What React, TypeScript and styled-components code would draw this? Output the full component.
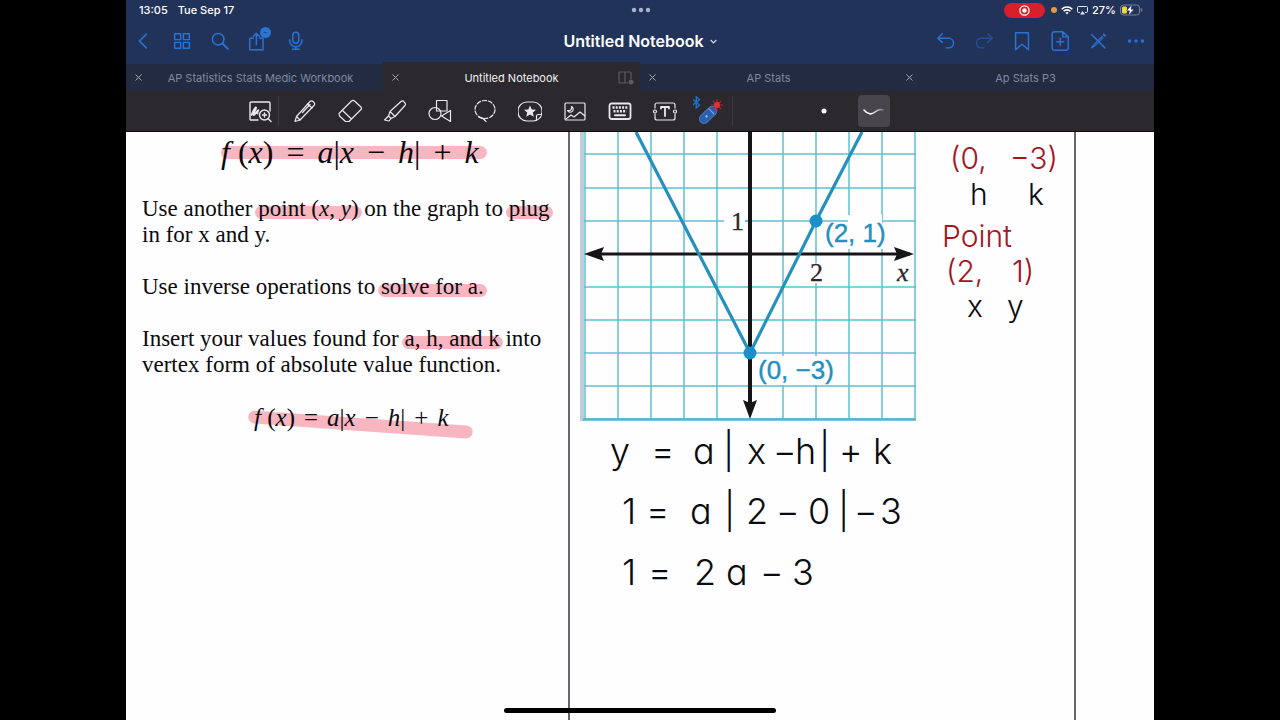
import React from "react";
import styled, { createGlobalStyle, css } from "styled-components";

const GlobalStyle = createGlobalStyle`
  *, *::before, *::after { box-sizing: border-box; }
  body { margin: 0; background: #000; }
  button { border: 0; padding: 0; background: none; color: inherit; font: inherit; cursor: pointer; }
  svg { display: block; flex: none; }
`;

const ui = `Inter, "Liberation Sans", sans-serif`;

const Screen = styled.div`
  min-height: 100vh;
  padding: 0 126px;
  background: #000;
  font-family: ${ui};
`;

const Tablet = styled.div`
  position: relative;
  display: flex;
  flex-direction: column;
  min-height: 100vh;
  overflow: hidden;
  background: #fefdff;
`;

const Header = styled.header`
  background: #223359;
  color: #fff;
`;

const StatusBar = styled.div`
  display: grid;
  grid-template-columns: 1fr auto 1fr;
  align-items: center;
  height: 20px;
  padding: 0 11px 0 13px;
  font-size: 11px;
  font-weight: 500;
`;

const StatusGroup = styled.div<{ $end?: boolean }>`
  display: flex;
  align-items: center;
  gap: ${(p) => (p.$end ? "4px" : "10px")};
  justify-content: ${(p) => (p.$end ? "flex-end" : "flex-start")};
`;

const RecordPill = styled.span`
  display: grid;
  place-items: center;
  width: 41px;
  height: 15px;
  margin-right: 2px;
  border-radius: 8px;
  background: #d81f2a;
`;

const OrangeDot = styled.span`
  width: 6px;
  height: 6px;
  border-radius: 50%;
  background: #e8973c;
`;

const NavBar = styled.nav`
  display: grid;
  grid-template-columns: 1fr auto 1fr;
  align-items: center;
  height: 42px;
`;

const NavGroup = styled.div<{ $end?: boolean }>`
  display: flex;
  gap: 2px;
  justify-content: ${(p) => (p.$end ? "flex-end" : "flex-start")};
`;

const NavButton = styled.button<{ $dim?: boolean }>`
  position: relative;
  display: grid;
  place-items: center;
  width: 36px;
  height: 36px;
  color: ${(p) => (p.$dim ? "#275096" : "#2a72d4")};
`;

const Badge = styled.span`
  position: absolute;
  top: 4px;
  right: 5px;
  width: 11px;
  height: 11px;
  border-radius: 50%;
  background: #2a72d4;
  color: #1c3f7c;
  font-size: 8px;
  line-height: 11px;
  text-align: center;
`;

const TitleButton = styled.button`
  display: flex;
  align-items: center;
  gap: 6px;
  font-size: 16px;
  font-weight: 600;
`;

const TabStrip = styled.div`
  display: flex;
  height: 29px;
  background: #222b3f;
`;

const Tab = styled.div<{ $active?: boolean }>`
  display: flex;
  flex: 1 1 0;
  align-items: center;
  min-width: 0;
  padding: 0 6px;
  background: ${(p) => (p.$active ? "#2b292e" : "transparent")};
  color: ${(p) => (p.$active ? "#f1f0f3" : "#8089a0")};
  border-top: 2px solid ${(p) => (p.$active ? "#2b292e" : "#223359")};
`;

const TabClose = styled.button`
  display: grid;
  place-items: center;
  width: 12px;
  height: 16px;
  color: #a5a9b6;
`;

const TabLabel = styled.button`
  flex: 1;
  font-size: 11px;
  white-space: nowrap;
`;

const TabTail = styled.span<{ $narrow?: boolean }>`
  width: ${(p) => (p.$narrow ? "0" : "12px")};
  display: flex;
  justify-content: flex-end;
  color: #5e5c63;
`;

const Toolbar = styled.div`
  display: flex;
  align-items: center;
  height: 41px;
  padding-left: 116px;
  background: #2b292e;
  border-bottom: 1px solid #0c0c0e;
  color: #e9e8ec;
`;

const ToolButton = styled.button<{ $narrow?: boolean }>`
  display: grid;
  place-items: center;
  width: ${(p) => (p.$narrow ? "36px" : "45px")};
  height: 32px;
`;

const Divider = styled.span`
  width: 1px;
  height: 30px;
  margin-right: 3px;
  background: #3b393f;
`;

const StrokeOptions = styled.div`
  display: flex;
  gap: 18px;
  margin-left: 72px;
`;

const StrokeButton = styled.button<{ $selected?: boolean }>`
  display: grid;
  place-items: center;
  width: 32px;
  height: 32px;
  border-radius: 4px;
  background: ${(p) => (p.$selected ? "#48464c" : "transparent")};
`;

const Page = styled.main`
  display: grid;
  flex: 1;
  grid-template-columns: 444fr 506fr 78fr;
  color: #0b0b0d;
`;

const column = css`
  border-right: 2px solid #67666a;
`;

const NotesColumn = styled.section`
  ${column}
  padding: 0 0 0 16px;
  font-family: "Liberation Serif", serif;
  font-size: 23px;
  line-height: 26px;
`;

const WorkColumn = styled.section`
  ${column}
  display: flex;
  justify-content: space-between;
  padding-left: 10px;
`;

const Paragraph = styled.p`
  margin: 0 0 26px;
`;

const Formula = styled.div<{ $large?: boolean }>`
  display: flex;
  align-items: center;
  width: fit-content;
  font-family: "Liberation Serif", serif;
  font-style: italic;
  white-space: nowrap;
  ${(p) =>
    p.$large
      ? css`
          gap: 13px;
          height: 40px;
          margin: 0 0 24px 79px;
          font-size: 32px;
        `
      : css`
          gap: 9px;
          height: 28px;
          margin: 0 0 0 112px;
          font-size: 25px;
        `}
`;

const Upright = styled.span`
  font-style: normal;
`;

const Mark = styled.mark<{ $tilt?: boolean }>`
  position: relative;
  z-index: 0;
  background: none;
  color: inherit;
  &::before {
    content: "";
    position: absolute;
    z-index: -1;
    left: -3px;
    right: -3px;
    top: 10px;
    height: 13px;
    border-radius: 7px;
    background: #f8b6c1;
  }
`;

const FormulaMark = styled(Mark)<{ $tilt?: boolean }>`
  display: flex;
  gap: inherit;
  &::before {
    ${(p) =>
      p.$tilt
        ? css`
            left: -6px;
            right: -24px;
            top: 13px;
            transform: rotate(4deg);
          `
        : css`
            left: 0;
            right: -8px;
            top: 7px;
          `}
  }
`;

const Work = styled.div`
  width: 336px;
`;

const Equations = styled.div`
  display: flex;
  flex-direction: column;
  padding-left: 30px;
`;

const Ink = styled.div<{ $columns: string; $red?: boolean; $indent?: number; $line: number; $before?: number; $small?: boolean }>`
  display: grid;
  grid-template-columns: ${(p) => p.$columns};
  margin-top: ${(p) => p.$before ?? 0}px;
  margin-left: ${(p) => p.$indent ?? 0}px;
  color: ${(p) => (p.$red ? "#a3141f" : "#0b0b0d")};
  font-family: ${ui};
  font-size: ${(p) => (p.$small ? "30px" : "36px")};
  font-weight: 300;
  font-feature-settings: "cv11";
  line-height: ${(p) => p.$line}px;
  white-space: pre;
`;

const SideNotes = styled.div`
  width: 132px;
  padding-top: 8px;
`;

const HomeIndicator = styled.div`
  position: absolute;
  bottom: 7px;
  left: 50%;
  width: 272px;
  height: 5px;
  margin-left: -136px;
  border-radius: 3px;
  background: #000;
`;

type IconProps = { size?: number; w?: number; children: React.ReactNode };
const Icon = ({ size = 24, w = 1.3, children }: IconProps) => (
  <svg width={size} height={size} viewBox="0 0 24 24" fill="none" stroke="currentColor"
    strokeWidth={w} strokeLinecap="round" strokeLinejoin="round" aria-hidden="true">
    {children}
  </svg>
);

const Cross = () => (
  <svg width="7" height="7" viewBox="0 0 7 7" stroke="currentColor" strokeWidth="1" aria-hidden="true">
    <path d="M.5 .5l6 6M6.5 .5l-6 6" />
  </svg>
);

const leftNav = [
  { label: "Back", art: <path d="M14.500 4.500L7 12l7.500 7.500" strokeWidth="1.900" /> },
  {
    label: "Thumbnails",
    art: <path d="M4 4h6.500v6.500H4zM13.500 4H20v6.500h-6.500zM4 13.500h6.500V20H4zM13.500 13.500H20V20h-6.500z" />,
  },
  { label: "Search", art: <><circle cx="10" cy="10" r="6.300" /><path d="M15 15l5.500 5.500" strokeWidth="2.200" /></> },
  { label: "Share", art: <path d="M7 9H3v12.500h14.500V9h-4M10.200 16V3.500M6.700 7l3.500-3.500L13.700 7" />, badge: true },
  {
    label: "Record",
    art: <><rect x="8.500" y="2.500" width="6.500" height="12" rx="3.200" /><path d="M5 10.500v1a6.700 6.700 0 0 0 13.500 0v-1M11.800 18.300v2.700M8 21h7.500" /></>,
  },
];

const rightNav = [
  { label: "Undo", art: <path d="M8 4L3 9l5 4.500M3 9h12a5.200 5.200 0 0 1 0 10.500h-3" /> },
  { label: "Redo", art: <path d="M16 4l5 5-5 4.500M21 9H9a5.200 5.200 0 0 0 0 10.500h3" />, dim: true },
  { label: "Bookmark", art: <path d="M5 3h14v18.500L12 15.500 5 21.500z" /> },
  {
    label: "Add page",
    art: <><path d="M3.500 4.500a2.500 2.500 0 0 1 2.500-2.500h9l6 5.500v12a2.500 2.500 0 0 1-2.500 2.500H6a2.500 2.500 0 0 1-2.500-2.500zM15 2v5.500h6" /><path d="M12.200 9v7.500M8.500 12.800H16" /></>,
  },
  {
    label: "Drawing mode",
    art: <><path d="M5 5l14.500 14.500" /><path d="M5 19.500L7 16.500 16.500 7M5 19.500L8 17.800 17.500 8.200" strokeWidth="1.200" /><path d="M18.300 5l1.200 1.200" strokeWidth="2.200" /></>,
  },
  {
    label: "More",
    art: <g fill="currentColor" stroke="none"><circle cx="5" cy="12" r="1.900" /><circle cx="12" cy="12" r="1.900" /><circle cx="19" cy="12" r="1.900" /></g>,
  },
];

const tools = [
  {
    label: "Pen",
    art: <><path d="M2 22.500l1.500-5L17 2.500a2 2 0 0 1 3 0l1 1a2 2 0 0 1 0 3L7 21z" /><path d="M14.500 5l4.500 4M3.500 17.500L7 21M9.500 13.500L17 5.500" /></>,
  },
  { label: "Eraser", art: <path d="M1 14.500L13.500 2a2 2 0 0 1 3 0l6.500 6a2 2 0 0 1 0 2.500L11 22.500H7.500L1.500 17zM4.500 11.500l9 8.500" /> },
  {
    label: "Highlighter",
    art: <path d="M7 12.500L18 2.500a2 2 0 0 1 3 .3l1 1.200a2 2 0 0 1 0 2.500L12 17.500zM7 12.500L5.500 17l2.500 2.500 4-2M5.500 17L1.500 21l4.500 1 2-2.500M5.500 17l2.500 2.500" />,
  },
  {
    label: "Shapes",
    art: <><rect x="8.500" y="1.500" width="10.500" height="10.500" /><circle cx="7" cy="14.500" r="6" /><path d="M22.500 11.500v11L13.500 17z" fill="#2b292e" /></>,
  },
  {
    label: "Lasso",
    art: <><ellipse cx="12" cy="10.500" rx="10" ry="9" strokeDasharray="4 2" /><path d="M6 18.500c3.500-.5 5 1.500 7 4" /></>,
  },
  {
    label: "Elements",
    art: <><rect x="0" y="3" width="24" height="19" rx="9" /><path d="M24 15.500h-3.500a2 2 0 0 0-2 2V21" fill="#2b292e" /><path d="M12 6.500l1.700 4 4.300.3-3.200 2.800 1 4.200-3.800-2.300-3.800 2.300 1-4.200L6 10.800l4.300-.3z" fill="currentColor" stroke="none" /></>,
  },
  {
    label: "Image",
    art: <><rect x="2" y="4" width="20" height="17" rx="1" /><path d="M3 20l5-4 3 2 6-5 5 4M8.500 7.500a3 3 0 1 1-4 4c3 .5 4.500-1 4-4z" /></>,
  },
  {
    label: "Keyboard",
    art: <><rect x="1.500" y="4.500" width="21" height="15.500" rx="2" strokeWidth="1.800" /><path d="M4.500 8.500h15M5.500 12.200h13" strokeDasharray="2 1.200" strokeWidth="2.400" strokeLinecap="butt" /><path d="M7 16.200h10" strokeWidth="2" /></>,
  },
  {
    label: "Text",
    art: <><path d="M2 9V6a2 2 0 0 1 2-2h16a2 2 0 0 1 2 2v3M2 15v4a2 2 0 0 0 2 2h16a2 2 0 0 0 2-2v-4" /><circle cx="2" cy="12.500" r="1.500" /><circle cx="22" cy="12.500" r="1.500" /><path d="M8 9.500V8h8v1.500M12 8v9" strokeWidth="1.800" /></>,
  },
];

const LaserPointer = () => (
  <svg width="34" height="30" viewBox="0 0 34 30" fill="none" aria-hidden="true">
    <path d="M0 3.500l6.500 5.500-3.200 3V.8l3.200 2.900L0 9" stroke="#1f6fd0" strokeWidth="1.400" />
    <g transform="rotate(-44 15 19)">
      <rect x="5" y="14.500" width="20" height="9" rx="4" fill="#2c5fa8" stroke="#3f7bcb" />
      <path d="M20 15v8" stroke="#78aae8" />
      <circle cx="13" cy="19" r="1.200" fill="#8dbbf0" />
    </g>
    <path d="M24 3v12M18 9h12M19.800 4.800l8.400 8.400M28.200 4.800l-8.400 8.400" stroke="#b3262c" strokeWidth="1.100" />
    <circle cx="24" cy="9" r="3" fill="#ef2b34" />
  </svg>
);

const gridX = [5, 38, 71, 104, 137, 203, 236, 269, 302, 335];
const gridY = [22, 56, 89, 155, 188, 221, 254, 287];

const Graph = () => (
  <svg width="336" height="289" viewBox="0 0 336 289" role="img" aria-label="Graph of an absolute value function">
    <rect x="0" y="0" width="4" height="289" fill="#c4cbd6" />
    <g stroke="#5ec0d2" strokeWidth="1.500">
      {gridX.map((x) => <path key={x} d={`M${x} 0V287`} />)}
      {gridY.map((y) => <path key={y} d={`M4 ${y}H336`} />)}
    </g>
    <path d="M3 287.500H336" stroke="#58b4cb" strokeWidth="2.500" />
    <g fill="#fefdff">
      <rect x="144" y="78" width="21" height="22" />
      <rect x="245" y="91" width="58" height="26" />
      <rect x="262" y="83" width="40" height="10" />
      <rect x="231" y="131" width="11" height="20" />
      <rect x="313" y="131" width="18" height="20" />
      <rect x="178" y="224" width="79" height="29" />
    </g>
    <path d="M165 89H170M262 89H268" stroke="#5ec0d2" strokeWidth="1.500" />
    <path d="M170 0V275" stroke="#161417" strokeWidth="4" />
    <path d="M10 122H330" stroke="#161417" strokeWidth="3" />
    <g fill="#161417">
      <path d="M4 122l20-7-3 7 3 7zM334 122l-20-7 3 7-3 7zM170 287l-7-19 7 3 7-3z" />
    </g>
    <path d="M56 0L170 221 236 89 282 0" fill="none" stroke="#2490bd" strokeWidth="3.200" />
    <circle cx="236" cy="89" r="6.500" fill="#1b8fca" />
    <circle cx="170" cy="221" r="6.500" fill="#1b8fca" />
    <g fontFamily="Liberation Serif, serif" fontSize="26" fill="#2b292c" stroke="#2b292c" strokeWidth=".3">
      <text x="151" y="98">1</text>
      <text x="230" y="149">2</text>
      <text x="317" y="149" fontStyle="italic">x</text>
    </g>
    <g fontFamily="Liberation Sans Narrow, Liberation Sans, sans-serif" fontSize="26" fill="#2490bd" stroke="#2490bd" strokeWidth=".4">
      <text x="245" y="110">(2, 1)</text>
      <text x="178" y="247">(0, −3)</text>
    </g>
  </svg>
);

const Equation = ({ large }: { large?: boolean }) => (
  <Formula $large={large}>
    <FormulaMark $tilt={!large}>
      <span>f<Upright> (</Upright>x<Upright>)</Upright></span>
      <Upright>=</Upright>
      <span>a<Upright>|</Upright>x</span>
      <Upright>−</Upright>
      <span>h<Upright>|</Upright></span>
      <Upright>+</Upright>
      <span>k</span>
    </FormulaMark>
  </Formula>
);

type InkRow = { text: string; columns: string; line: number; before?: number; indent?: number; red?: boolean };

const equations: InkRow[] = [
  { text: "y = a | x − h | + k", columns: "41px 42px 30px 24px 26px 22px 24px 20px 34px 22px", line: 60 },
  { text: "1 = a | 2 − 0 | − 3", columns: "24px 44px 34px 22px 30px 32px 30px 16px 26px 22px", line: 60, indent: 12 },
  { text: "1 = 2 a − 3", columns: "26px 46px 32px 34px 32px 22px", line: 62, indent: 12 },
];

const sideNotes: InkRow[] = [
  { text: "(0, −3)", columns: "60px 60px", indent: 8, red: true, line: 36 },
  { text: "h k", columns: "58px 22px", indent: 28, line: 36 },
  { text: "Point", columns: "80px", before: 6, red: true, line: 36 },
  { text: "(2, 1)", columns: "66px 32px", indent: 4, red: true, line: 34 },
  { text: "x y", columns: "40px 20px", indent: 25, line: 36 },
];

const InkText = ({ row, small }: { row: InkRow; small?: boolean }) => (
  <Ink $columns={row.columns} $indent={row.indent} $red={row.red} $line={row.line} $before={row.before} $small={small}>
    {row.text.split(" ").map((part, i) => <span key={i}>{part}</span>)}
  </Ink>
);

const tabs = [
  { title: "AP Statistics Stats Medic Workbook", narrow: true },
  { title: "Untitled Notebook", active: true },
  { title: "AP Stats" },
  { title: "Ap Stats P3" },
];

export default function App() {
  return (
    <Screen>
      <GlobalStyle />
      <Tablet>
        <Header>
          <StatusBar>
            <StatusGroup><span>13:05</span><span>Tue Sep 17</span></StatusGroup>
            <svg width="20" height="6" viewBox="0 0 20 6" fill="#a9b4cf" aria-hidden="true">
              <circle cx="3" cy="3" r="2.200" /><circle cx="10" cy="3" r="2.200" /><circle cx="17" cy="3" r="2.200" />
            </svg>
            <StatusGroup $end>
              <RecordPill>
                <svg width="11" height="11" viewBox="0 0 11 11" aria-hidden="true">
                  <circle cx="5.500" cy="5.500" r="4.600" fill="none" stroke="#fff" strokeWidth="1.300" /><circle cx="5.500" cy="5.500" r="2.200" fill="#fff" />
                </svg>
              </RecordPill>
              <OrangeDot />
              <svg width="12" height="9" viewBox="0 0 12 9" fill="none" stroke="#fff" strokeWidth="1.600" aria-hidden="true">
                <path d="M.7 3.200a7.500 7.500 0 0 1 10.600 0M2.600 5.300a4.800 4.800 0 0 1 6.800 0" /><path d="M4.500 6.800a2.100 2.100 0 0 1 3 0L6 8.500z" fill="#fff" stroke="none" />
              </svg>
              <svg width="11" height="9" viewBox="0 0 11 9" fill="none" stroke="#dfe4ef" aria-hidden="true">
                <path d="M3 6.500H1.500a1 1 0 0 1-1-1v-4a1 1 0 0 1 1-1h8a1 1 0 0 1 1 1v4a1 1 0 0 1-1 1H8" /><path d="M5.500 5L8 8.500H3z" fill="#dfe4ef" stroke="none" />
              </svg>
              <span>27%</span>
              <svg width="23" height="12" viewBox="0 0 23 12" aria-hidden="true">
                <rect x=".5" y="1" width="19" height="10" rx="3" fill="none" stroke="#76819b" />
                <rect x="2" y="2.500" width="5" height="7" rx="1.500" fill="#f3d83a" />
                <path d="M21.500 4.500v3" stroke="#76819b" strokeWidth="1.500" />
                <path d="M12 .5L6.500 6.800h3L8.500 11.500 14 5.200h-3z" fill="#fff" stroke="#223359" strokeWidth=".5" />
              </svg>
            </StatusGroup>
          </StatusBar>
          <NavBar>
            <NavGroup>
              {leftNav.map((n) => (
                <NavButton key={n.label} aria-label={n.label}>
                  <Icon size={22} w={1.6}>{n.art}</Icon>
                  {n.badge && <Badge>−</Badge>}
                </NavButton>
              ))}
            </NavGroup>
            <TitleButton>
              Untitled Notebook
              <svg width="7" height="5" viewBox="0 0 7 5" fill="none" stroke="#d5dbe8" strokeWidth="1.200" aria-hidden="true"><path d="M.7 1L3.500 3.800 6.300 1" /></svg>
            </TitleButton>
            <NavGroup $end>
              {rightNav.map((n) => (
                <NavButton key={n.label} aria-label={n.label} $dim={n.dim}>
                  <Icon size={22} w={1.6}>{n.art}</Icon>
                </NavButton>
              ))}
            </NavGroup>
          </NavBar>
          <TabStrip>
            {tabs.map((t) => (
              <Tab key={t.title} $active={t.active}>
                <TabClose aria-label={`Close ${t.title}`}><Cross /></TabClose>
                <TabLabel>{t.title}</TabLabel>
                <TabTail $narrow={t.narrow}>
                  {t.active && (
                    <svg width="16" height="14" viewBox="0 0 16 14" fill="none" stroke="currentColor" strokeWidth="1.200" aria-hidden="true">
                      <path d="M10 12H7V1h5a1 1 0 0 1 1 1v6M7 12H2a1 1 0 0 1-1-1V2a1 1 0 0 1 1-1h5" /><circle cx="13" cy="11" r="2.500" fill="currentColor" stroke="none" />
                    </svg>
                  )}
                </TabTail>
              </Tab>
            ))}
          </TabStrip>
          <Toolbar>
            <ToolButton $narrow aria-label="Zoom window">
              <Icon w={1.4}>
                <path d="M10 21H3a1 1 0 0 1-1-1V4a1 1 0 0 1 1-1h18a1 1 0 0 1 1 1v8" />
                <path d="M3.500 16C5 12 7 8 8 8.500S4.500 15 5.500 16 9.500 10.500 10.300 11 8.500 14 9.500 14.500" strokeWidth="1.700" />
                <circle cx="16.500" cy="16" r="5" /><path d="M20 19.500l3 3M16.500 14v4M14.500 16h4" />
              </Icon>
            </ToolButton>
            <Divider />
            {tools.map((t) => (
              <ToolButton key={t.label} aria-label={t.label}><Icon w={1.2}>{t.art}</Icon></ToolButton>
            ))}
            <ToolButton aria-label="Laser pointer"><LaserPointer /></ToolButton>
            <Divider />
            <StrokeOptions>
              <StrokeButton aria-label="Dot"><svg width="6" height="6" aria-hidden="true"><circle cx="3" cy="3" r="2.500" fill="#fff" /></svg></StrokeButton>
              <StrokeButton $selected aria-label="Line">
                <svg width="24" height="10" viewBox="0 0 24 10" fill="none" aria-hidden="true">
                  <defs><linearGradient id="fade"><stop offset=".4" stopColor="#fff" /><stop offset="1" stopColor="#77757b" /></linearGradient></defs>
                  <path d="M2 4c4 5 8 4.500 11 2s5-3 8-2" stroke="url(#fade)" strokeWidth="1.600" strokeLinecap="round" />
                </svg>
              </StrokeButton>
            </StrokeOptions>
          </Toolbar>
        </Header>
        <Page>
          <NotesColumn>
            <Equation large />
            <Paragraph>
              Use another <Mark>point (<i>x</i>,<i> y</i>)</Mark> on the graph to <Mark>plug</Mark><br />in for x and y.
            </Paragraph>
            <Paragraph>Use inverse operations to <Mark>solve for a.</Mark></Paragraph>
            <Paragraph>
              Insert your values found for <Mark>a, h, and k</Mark> into<br />vertex form of absolute value function.
            </Paragraph>
            <Equation />
          </NotesColumn>
          <WorkColumn>
            <Work>
              <Graph />
              <Equations>{equations.map((r) => <InkText key={r.text} row={r} />)}</Equations>
            </Work>
            <SideNotes>{sideNotes.map((r) => <InkText key={r.text} row={r} small />)}</SideNotes>
          </WorkColumn>
        </Page>
        <HomeIndicator />
      </Tablet>
    </Screen>
  );
}
